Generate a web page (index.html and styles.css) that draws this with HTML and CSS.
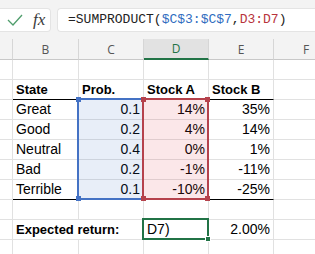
FILE: index.html
```html
<!DOCTYPE html>
<html lang="en">
<head>
    <meta charset="UTF-8">
    <title>Expected return</title>
    <link rel="stylesheet" href="styles.css">
</head>
<body>
    <div class="bar">
        <div class="namebox">
            <svg class="tick" width="16" height="12" viewBox="0 0 16 12">
                <polyline points="1,6 6,11 15,1" fill="none" stroke="#4f9d6c" stroke-width="1.3"/>
            </svg>
            <span class="fx">fx</span>
        </div>
        <div class="formula">=SUMPRODUCT(<span class="ref-blue">$C$3:$C$7</span>,<span class="ref-red">D3:D7</span>)</div>
    </div>

    <div class="book">
        <div class="sheet">
            <!-- column headers -->
            <div class="hd"></div>
            <div class="hd">B</div>
            <div class="hd">C</div>
            <div class="hd hd-on">D</div>
            <div class="hd">E</div>
            <div class="hd">F</div>

            <div class="c"></div><div class="c"></div><div class="c"></div><div class="c"></div><div class="c"></div><div class="c"></div>

            <div class="c"></div>
            <div class="c b line">State</div>
            <div class="c b line">Prob.</div>
            <div class="c b line">Stock A</div>
            <div class="c b line">Stock B</div>
            <div class="c"></div>

            <div class="c"></div><div class="c">Great</div><div class="c r">0.1</div><div class="c r">14%</div><div class="c r">35%</div><div class="c"></div>
            <div class="c"></div><div class="c">Good</div><div class="c r">0.2</div><div class="c r">4%</div><div class="c r">14%</div><div class="c"></div>
            <div class="c"></div><div class="c">Neutral</div><div class="c r">0.4</div><div class="c r">0%</div><div class="c r">1%</div><div class="c"></div>
            <div class="c"></div><div class="c">Bad</div><div class="c r">0.2</div><div class="c r">-1%</div><div class="c r">-11%</div><div class="c"></div>
            <div class="c"></div>
            <div class="c line">Terrible</div>
            <div class="c r line">0.1</div>
            <div class="c r line">-10%</div>
            <div class="c r line">-25%</div>
            <div class="c"></div>

            <div class="c"></div><div class="c"></div><div class="c"></div><div class="c"></div><div class="c"></div><div class="c"></div>

            <div class="c"></div>
            <div class="c b span2">Expected return:</div>
            <div class="c edit">D7)</div>
            <div class="c r">2.00%</div>
            <div class="c"></div>

            <div class="c"></div><div class="c"></div><div class="c"></div><div class="c"></div><div class="c"></div><div class="c"></div>
        </div>

        <!-- formula reference ranges and the active cell, on the same grid -->
        <div class="sheet marks">
            <div class="range range-blue">
                <i class="knob tl"></i><i class="knob bl"></i>
            </div>
            <div class="range range-red">
                <i class="knob tl"></i><i class="knob tr"></i><i class="knob bl"></i><i class="knob br"></i>
            </div>
            <div class="active"><i class="fill"></i></div>
        </div>
    </div>
</body>
</html>
```

FILE: styles.css
```css
* {
    box-sizing: border-box;
}
body {
    margin: 0;
    width: 315px;
    height: 254px;
    overflow: hidden;
    background: #fff;
    font-family: 'Liberation Sans', Arial, sans-serif;
}

/* formula bar */
.bar {
    display: flex;
    gap: 6px;
    height: 39px;
    padding: 8px 0 7px;
    background: #f3f3f3;
}
.namebox {
    width: 51px;
    display: flex;
    align-items: center;
    background: #fff;
    border: 1px solid #e4e4e4;
    border-left: 0;
    border-radius: 0 4px 4px 0;
}
.tick {
    margin-left: 7px;
}
.fx {
    margin-left: 10px;
    font-family: 'Liberation Serif', serif;
    font-style: italic;
    font-size: 17px;
    color: #3a3a3a;
}
.formula {
    flex: 1;
    padding-left: 10px;
    background: #fff;
    border: 1px solid #e4e4e4;
    border-right: 0;
    border-radius: 4px 0 0 4px;
    font-family: 'Liberation Mono', monospace;
    font-size: 13px;
    line-height: 22px;
    color: #222;
    white-space: nowrap;
}
.ref-blue {
    color: #2f6cc0;
}
.ref-red {
    color: #b8333c;
}

/* grid */
.book {
    display: grid;
    width: 339px;
}
.sheet {
    grid-area: 1 / 1;
    display: grid;
    grid-template-columns: 13px 66px 65px 65px 65px 65px;
    grid-template-rows: 21px repeat(10, 20px);
}
.marks {
    pointer-events: none;
}
.hd {
    display: flex;
    align-items: center;
    justify-content: center;
    background: #f3f3f3;
    border-right: 1px solid #d6d6d6;
    border-bottom: 1px solid #c8c8c8;
    font-family: 'Open Sans', sans-serif;
    font-size: 12px;
    color: #555;
}
.hd-on {
    background: #e2e2e2;
    color: #217346;
    border-bottom: 2px solid #217346;
}
.c {
    display: flex;
    align-items: flex-end;
    padding: 0 3px 1px;
    border-right: 1px solid #e1e1e1;
    border-bottom: 1px solid #e1e1e1;
    font-size: 14px;
    line-height: 17px;
    color: #000;
    white-space: nowrap;
}
.r {
    justify-content: flex-end;
}
.b {
    font-weight: bold;
    font-size: 13px;
}
.line {
    border-bottom-color: #000;
}
.span2 {
    grid-column: span 2;
}

/* reference ranges drawn over the cells: C3:C7 and D3:D7 */
.range {
    position: relative;
    grid-column: 3;
    grid-row: 4 / 9;
    margin: -2px 0 0 -2px;
    border: 2px solid #4472c4;
    background: rgba(68, 114, 196, 0.12);
}
.range-red {
    grid-column: 4;
    border-color: #b5424c;
    background: rgba(220, 60, 70, 0.12);
}
.knob {
    position: absolute;
    width: 5px;
    height: 5px;
    background: #4472c4;
}
.range-red .knob {
    background: #b5424c;
}
.tl { top: -3px; left: -3px; }
.tr { top: -3px; right: -3px; }
.bl { bottom: -3px; left: -3px; }
.br { bottom: -3px; right: -3px; }

/* D9, being edited */
.active {
    position: relative;
    grid-column: 4;
    grid-row: 10;
    margin: -2px 0 0 -2px;
    border: 2px solid #217346;
}
.fill {
    position: absolute;
    right: -4px;
    bottom: -4px;
    width: 6px;
    height: 6px;
    background: #217346;
    border: 1px solid #fff;
}
```
